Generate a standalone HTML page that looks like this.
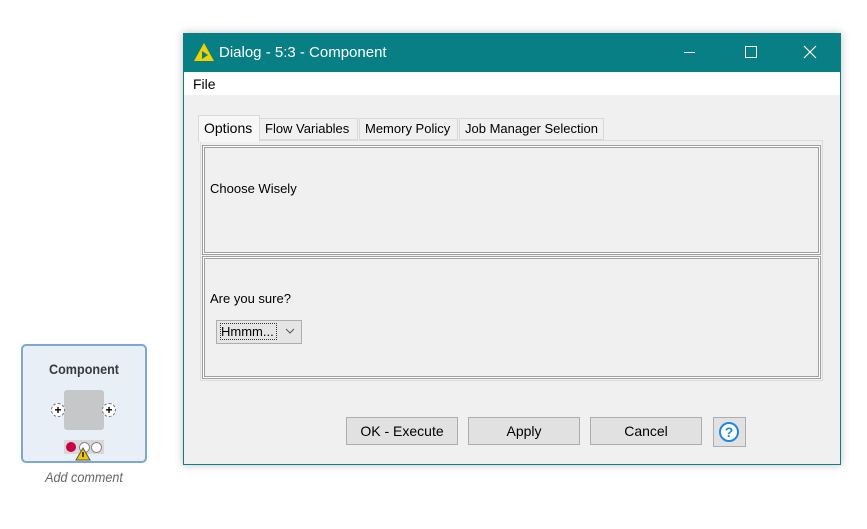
<!DOCTYPE html>
<html><head><style>
body{margin:0;width:867px;height:529px;background:#fff;position:relative;font-family:"Liberation Sans",sans-serif;overflow:hidden}
.a{position:absolute}
.btn{position:absolute;top:417px;height:28px;background:#e1e1e1;border:1px solid #adadad;box-sizing:border-box;font-size:14px;text-align:center;line-height:27px;color:#000}
.tab{position:absolute;top:118px;height:22px;background:#f0f0f0;border:1px solid #d9d9d9;box-sizing:border-box;font-size:13px;line-height:20px;padding:0 5px;color:#000}
</style></head><body>
<div class="a" style="left:21px;top:344px;width:126px;height:119px;background:#e8eff7;border:2px solid #7ca8d2;border-radius:5px;box-sizing:border-box"></div>
<div class="a" style="left:21px;top:361px;width:126px;text-align:center;font-size:14px;font-weight:bold;color:#3a3a3a;transform:scaleX(0.9)">Component</div>
<div class="a" style="left:64px;top:390px;width:40px;height:40px;background:#c6c7c9;border-radius:3px"></div>
<div class="a" style="left:51px;top:403px;width:12px;height:12px;border:1px dashed #777;border-radius:50%;background:#fff;font-size:12px;line-height:12px;text-align:center;font-weight:bold">+</div>
<div class="a" style="left:102px;top:403px;width:12px;height:12px;border:1px dashed #777;border-radius:50%;background:#fff;font-size:12px;line-height:12px;text-align:center;font-weight:bold">+</div>
<div class="a" style="left:64px;top:440px;width:40px;height:14px;background:#d8d8d8"></div>
<div class="a" style="left:66px;top:442px;width:10px;height:10px;border-radius:50%;background:#c8004a"></div>
<div class="a" style="left:79px;top:442px;width:9px;height:9px;border-radius:50%;background:#fff;border:1px solid #888"></div>
<div class="a" style="left:91px;top:442px;width:9px;height:9px;border-radius:50%;background:#fff;border:1px solid #888"></div>
<svg class="a" style="left:75px;top:447px" width="16" height="14"><polygon points="8,1 15,13 1,13" fill="#f3c600" stroke="#555" stroke-width="1"/><rect x="7.3" y="5" width="1.4" height="5" fill="#000"/></svg>
<div class="a" style="left:21px;top:469px;width:126px;text-align:center;font-size:14px;font-style:italic;color:#666;transform:scaleX(0.9)">Add comment</div>
<div class="a" style="left:183px;top:33px;width:658px;height:432px;background:#f0f0f0;box-shadow:0 0 8px rgba(0,0,0,0.25);border:1px solid #0a7f84;box-sizing:border-box"></div>
<div class="a" style="left:183px;top:33px;width:658px;height:39px;background:#077f84"></div>
<svg class="a" style="left:193px;top:42px" width="22" height="20"><polygon points="11,1 21,19 1,19" fill="#f2d100"/><polygon points="9,9 15,13 9,17" fill="#077f84"/></svg>
<div class="a" style="left:219px;top:44px;color:#fff;font-size:15px">Dialog - 5:3 - Component</div>
<div class="a" style="left:684px;top:52px;width:11px;height:1px;background:#fff"></div>
<div class="a" style="left:745px;top:46px;width:10px;height:10px;border:1px solid #fff"></div>
<svg class="a" style="left:803px;top:45px" width="14" height="14"><path d="M1,1L13,13M13,1L1,13" stroke="#fff" stroke-width="1.2"/></svg>
<div class="a" style="left:184px;top:72px;width:656px;height:23px;background:#fff"></div>
<div class="a" style="left:193px;top:76px;font-size:14px">File</div>
<div class="tab" style="left:259px;width:99px">Flow Variables</div>
<div class="tab" style="left:359px;width:99px">Memory Policy</div>
<div class="tab" style="left:459px;width:145px">Job Manager Selection</div>
<div class="a" style="left:200px;top:140px;width:623px;height:241px;border:1px solid #dcdcdc;background:#f0f0f0;box-sizing:border-box"></div>
<div class="tab" style="left:198px;top:115px;height:27px;width:62px;background:#f7f7f7;border-bottom:none;font-size:14px;line-height:24px">Options</div>
<div class="a" style="left:202px;top:145px;width:619px;height:110px;border:1px solid #a0a0a0;box-shadow:inset 1px 1px 0 #fff,inset -1px -1px 0 #fff, inset 2px 2px 0 #a0a0a0, inset -2px -2px 0 #a0a0a0;box-sizing:border-box"></div>
<div class="a" style="left:202px;top:256px;width:619px;height:123px;border:1px solid #a0a0a0;box-shadow:inset 1px 1px 0 #fff,inset -1px -1px 0 #fff, inset 2px 2px 0 #a0a0a0, inset -2px -2px 0 #a0a0a0;box-sizing:border-box"></div>
<div class="a" style="left:210px;top:181px;font-size:13px">Choose Wisely</div>
<div class="a" style="left:210px;top:291px;font-size:13px">Are you sure?</div>
<div class="a" style="left:216px;top:320px;width:86px;height:24px;background:#e5e5e5;border:1px solid #adadad;box-sizing:border-box"></div>
<div class="a" style="left:220px;top:323px;width:57px;height:17px;border:1px dotted #333;box-sizing:border-box;font-size:13px;line-height:15px">Hmmm...</div>
<svg class="a" style="left:285px;top:328px" width="10" height="6"><path d="M1,1L5,5L9,1" stroke="#555" fill="none"/></svg>
<div class="btn" style="left:346px;width:112px">OK - Execute</div>
<div class="btn" style="left:468px;width:112px">Apply</div>
<div class="btn" style="left:590px;width:112px">Cancel</div>
<div class="btn" style="left:713px;width:33px;height:30px"></div>
<svg class="a" style="left:718px;top:421px" width="22" height="22"><circle cx="11" cy="11" r="9" fill="#fff" stroke="#1e88e5" stroke-width="2"/><text x="11" y="16" text-anchor="middle" font-size="14" font-weight="bold" fill="#1e88e5" font-family="Liberation Sans">?</text></svg>
</body></html>
